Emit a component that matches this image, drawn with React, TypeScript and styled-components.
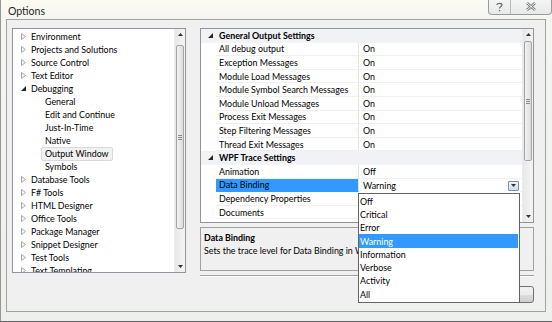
import React from "react";
import styled, { createGlobalStyle, css } from "styled-components";

const GlobalStyle = createGlobalStyle`
  html, body { margin: 0; padding: 0; background: #f2f4f1; }
  body { width: 552px; height: 322px; overflow: hidden; font-family: Lato, "Open Sans", sans-serif; font-size: 8.9px; color: #000; }
  * { box-sizing: border-box; }
`;

const Frame = styled.div`
  width: 552px;
  height: 322px;
  display: flex;
  flex-direction: column;
  background: linear-gradient(180deg, #fbfbf3 0px, #f4f6f2 18px, #eef0ee 100%);
  border-left: 1px solid #9a9590;
  border-bottom: 1px solid #606060;
  padding: 0 0 9px 5px;
  position: relative;
`;

const TitleBar = styled.div`
  height: 19px;
  display: flex;
  align-items: flex-start;
  justify-content: space-between;
`;

const Title = styled.div`
  padding: 5px 0 0 2px;
  font-size: 10.5px;
  color: #1e1e1e;
`;

const CaptionButtons = styled.div`
  display: flex;
  height: 16px;
  margin-top: -1px;
  border: 1px solid #9a9a9a;
  border-top: none;
  border-radius: 0 0 4px 4px;
  background: linear-gradient(180deg, #f6f6f6, #e6e8ea);
  overflow: hidden;
`;

const CaptionButton = styled.div<{ $w: number; $last?: boolean }>`
  width: ${(p) => p.$w}px;
  display: flex;
  align-items: center;
  justify-content: center;
  ${(p) => !p.$last && css`border-right: 1px solid #b8b8b8;`}
`;

const Client = styled.div`
  flex: 1;
  margin-right: 6px;
  background: #f0f0f0;
  border: 1px solid #a2a2a2;
  display: grid;
  grid-template-columns: 174px 334px;
  column-gap: 14px;
  align-items: start;
  padding: 8px 0 0 5px;
`;

const TreePanel = styled.div`
  height: 245px;
  border: 1px solid #8f959b;
  background: #fff;
  display: flex;
  overflow: hidden;
`;

const TreeList = styled.div`
  flex: 1;
  padding-top: 1px;
  overflow: hidden;
`;

const TreeRow = styled.div<{ $level: number }>`
  height: 13px;
  display: flex;
  align-items: center;
  padding-left: ${(p) => (p.$level ? 28 : 8)}px;
  white-space: nowrap;
`;

const Expander = styled.span`
  width: 6px;
  display: inline-flex;
  align-items: center;
`;

const TreeLabel = styled.span<{ $selected?: boolean }>`
  line-height: 12px;
  padding: 0 3px;
  border: 1px solid transparent;
  ${(p) =>
    p.$selected &&
    css`
      background: #f1f1f1;
      border-color: #dadada;
      border-radius: 2px;
    `}
`;

const VScroll = styled.div`
  width: 11px;
  display: flex;
  flex-direction: column;
  background: linear-gradient(90deg, #e8e8e8, #f4f4f4);
  border-left: 1px solid #ececec;
`;

const ScrollArrow = styled.div`
  height: 11px;
  display: flex;
  align-items: center;
  justify-content: center;
`;

const Spacer = styled.div<{ $h: number }>`
  height: ${(p) => p.$h}px;
  flex: none;
`;

const Thumb = styled.div<{ $h: number }>`
  height: ${(p) => p.$h}px;
  margin: 0 1px;
  border: 1px solid #a4a4a4;
  border-radius: 2px;
  background: linear-gradient(90deg, #f2f2f2, #dcdcdc);
  display: flex;
  align-items: center;
  justify-content: center;
`;

const Grip = styled.div`
  width: 4px;
  height: 5px;
  background: repeating-linear-gradient(180deg, #8a8a8a 0 1px, transparent 1px 2px);
`;

const Fill = styled.div`
  flex: 1;
`;

const RightColumn = styled.div`
  display: flex;
  flex-direction: column;
`;

const PropGrid = styled.div`
  height: 195px;
  border: 1px solid #8f959b;
  background: #fff;
  display: flex;
`;

const GridBody = styled.div`
  flex: 1;
  display: flex;
  flex-direction: column;
`;

const CategoryRow = styled.div`
  height: 13.6px;
  flex: none;
  display: flex;
  align-items: center;
  background: #f1f2f6;
  font-weight: 700;
  border-bottom: 1px solid #f4f4f6;
`;

const CatGlyph = styled.span`
  width: 18px;
  display: inline-flex;
  justify-content: center;
  padding-left: 1px;
`;

const PropRow = styled.div`
  height: 13.6px;
  flex: none;
  display: grid;
  grid-template-columns: 15px 143px 1fr;
`;

const Gutter = styled.div`
  background: #fff;
`;

const NameCell = styled.div<{ $selected?: boolean }>`
  padding-left: 3px;
  display: flex;
  align-items: center;
  border-bottom: 1px solid #f0f0f0;
  border-right: 1px solid #e4e4e4;
  white-space: nowrap;
  overflow: hidden;
  ${(p) =>
    p.$selected &&
    css`
      background: #3399ff;
      border-bottom-color: #3399ff;
    `}
`;

const ValueCell = styled.div`
  padding-left: 4px;
  display: flex;
  align-items: center;
  border-bottom: 1px solid #f0f0f0;
  position: relative;
`;

const Combo = styled.div`
  position: absolute;
  left: 0;
  right: 2px;
  top: 1px;
  bottom: -1px;
  display: flex;
  align-items: center;
  padding-left: 4px;
  background: #fff;
`;

const ComboText = styled.span`
  flex: 1;
`;

const ComboButton = styled.div`
  width: 11px;
  height: 10px;
  border: 1px solid #7a8ea8;
  border-radius: 1px;
  background: linear-gradient(180deg, #f2f6fb, #cfdcec);
  display: flex;
  align-items: center;
  justify-content: center;
  margin-right: 1px;
`;

const DropList = styled.div`
  position: absolute;
  left: -1px;
  top: 13px;
  width: 162px;
  border: 1px solid #646464;
  background: #fff;
  padding: 1px 0;
  z-index: 10;
`;

const DropItem = styled.div<{ $active?: boolean }>`
  height: 13.3px;
  display: flex;
  align-items: center;
  padding-left: 1px;
  margin-right: 1px;
  ${(p) =>
    p.$active &&
    css`
      background: #3399ff;
      color: #fff;
    `}
`;

const DescBox = styled.div`
  margin-top: 4px;
  height: 44px;
  border: 1px solid #a0a0a0;
  background: #f0f0f0;
  padding: 3px 3px 0;
  line-height: 13px;
  overflow: hidden;
  white-space: nowrap;
`;

const DescTitle = styled.div`
  font-weight: 700;
`;

const Separator = styled.div`
  margin-top: 4px;
  height: 2px;
  border-top: 1px solid #a0a0a0;
  border-bottom: 1px solid #fff;
`;

const ButtonRow = styled.div`
  margin-top: 9px;
  display: flex;
  justify-content: flex-end;
  gap: 6px;
`;

const DlgButton = styled.button`
  width: 73px;
  height: 17px;
  font: inherit;
  border: 1px solid #707070;
  border-radius: 3px;
  background: linear-gradient(180deg, #f2f2f2 0%, #ebebeb 50%, #dddddd 51%, #cfcfcf 100%);
  padding: 0;
`;

const Collapsed = () => (
  <svg width="5" height="7" viewBox="0 0 5 7">
    <path d="M0.5 0.5 L4.5 3.5 L0.5 6.5 Z" fill="#fff" stroke="#a6a6a6" strokeWidth="1" />
  </svg>
);

const Expanded = () => (
  <svg width="5" height="5" viewBox="0 0 5 5">
    <path d="M5 0 L5 5 L0 5 Z" fill="#262626" />
  </svg>
);

const UpArrow = () => (
  <svg width="5" height="3" viewBox="0 0 5 3">
    <path d="M0 3 L2.5 0 L5 3 Z" fill="#333" />
  </svg>
);

const DownArrow = () => (
  <svg width="5" height="3" viewBox="0 0 5 3">
    <path d="M0 0 L5 0 L2.5 3 Z" fill="#333" />
  </svg>
);

type TreeItem = { label: string; level: number; state?: "c" | "e"; selected?: boolean };

const treeItems: TreeItem[] = [
  { label: "Environment", level: 0, state: "c" },
  { label: "Projects and Solutions", level: 0, state: "c" },
  { label: "Source Control", level: 0, state: "c" },
  { label: "Text Editor", level: 0, state: "c" },
  { label: "Debugging", level: 0, state: "e" },
  { label: "General", level: 1 },
  { label: "Edit and Continue", level: 1 },
  { label: "Just-In-Time", level: 1 },
  { label: "Native", level: 1 },
  { label: "Output Window", level: 1, selected: true },
  { label: "Symbols", level: 1 },
  { label: "Database Tools", level: 0, state: "c" },
  { label: "F# Tools", level: 0, state: "c" },
  { label: "HTML Designer", level: 0, state: "c" },
  { label: "Office Tools", level: 0, state: "c" },
  { label: "Package Manager", level: 0, state: "c" },
  { label: "Snippet Designer", level: 0, state: "c" },
  { label: "Test Tools", level: 0, state: "c" },
  { label: "Text Templating", level: 0, state: "c" },
];

type GridEntry =
  | { kind: "cat"; label: string }
  | { kind: "prop"; name: string; value: string; selected?: boolean };

const gridEntries: GridEntry[] = [
  { kind: "cat", label: "General Output Settings" },
  { kind: "prop", name: "All debug output", value: "On" },
  { kind: "prop", name: "Exception Messages", value: "On" },
  { kind: "prop", name: "Module Load Messages", value: "On" },
  { kind: "prop", name: "Module Symbol Search Messages", value: "On" },
  { kind: "prop", name: "Module Unload Messages", value: "On" },
  { kind: "prop", name: "Process Exit Messages", value: "On" },
  { kind: "prop", name: "Step Filtering Messages", value: "On" },
  { kind: "prop", name: "Thread Exit Messages", value: "On" },
  { kind: "cat", label: "WPF Trace Settings" },
  { kind: "prop", name: "Animation", value: "Off" },
  { kind: "prop", name: "Data Binding", value: "Warning", selected: true },
  { kind: "prop", name: "Dependency Properties", value: "" },
  { kind: "prop", name: "Documents", value: "" },
];

const levels = ["Off", "Critical", "Error", "Warning", "Information", "Verbose", "Activity", "All"];

const Scrollbar: React.FC<{ before: number; thumb: number }> = ({ before, thumb }) => (
  <VScroll>
    <ScrollArrow>
      <UpArrow />
    </ScrollArrow>
    <Spacer $h={before} />
    <Thumb $h={thumb}>
      <Grip />
    </Thumb>
    <Fill />
    <ScrollArrow>
      <DownArrow />
    </ScrollArrow>
  </VScroll>
);

export default function App() {
  return (
    <>
      <GlobalStyle />
      <Frame>
        <TitleBar>
          <Title>Options</Title>
          <CaptionButtons>
            <CaptionButton $w={22}>
              <svg width="7" height="10" viewBox="0 0 7 10">
                <path
                  d="M1 3 C1 0.8 6 0.8 6 3 C6 4.6 3.5 4.6 3.5 6.5 M3.5 8 L3.5 9.2"
                  fill="none"
                  stroke="#6a6a6a"
                  strokeWidth="1.3"
                />
              </svg>
            </CaptionButton>
            <CaptionButton $w={40} $last>
              <svg width="10" height="9" viewBox="0 0 10 9">
                <path d="M1 1 L9 8 M9 1 L1 8" fill="none" stroke="#7a7a7a" strokeWidth="2.6" />
                <path d="M1 1 L9 8 M9 1 L1 8" fill="none" stroke="#f4f4f4" strokeWidth="1" />
              </svg>
            </CaptionButton>
          </CaptionButtons>
        </TitleBar>
        <Client>
          <TreePanel>
            <TreeList>
              {treeItems.map((t) => (
                <TreeRow key={t.label} $level={t.level}>
                  {t.level === 0 && (
                    <Expander>{t.state === "e" ? <Expanded /> : <Collapsed />}</Expander>
                  )}
                  <TreeLabel $selected={t.selected}>{t.label}</TreeLabel>
                </TreeRow>
              ))}
            </TreeList>
            <Scrollbar before={5} thumb={184} />
          </TreePanel>
          <RightColumn>
            <PropGrid>
              <GridBody>
                {gridEntries.map((e) =>
                  e.kind === "cat" ? (
                    <CategoryRow key={e.label}>
                      <CatGlyph>
                        <Expanded />
                      </CatGlyph>
                      {e.label}
                    </CategoryRow>
                  ) : (
                    <PropRow key={e.name}>
                      <Gutter />
                      <NameCell $selected={e.selected}>{e.name}</NameCell>
                      <ValueCell>
                        {e.selected ? (
                          <Combo>
                            <ComboText>{e.value}</ComboText>
                            <ComboButton>
                              <DownArrow />
                            </ComboButton>
                            <DropList>
                              {levels.map((l) => (
                                <DropItem key={l} $active={l === e.value}>
                                  {l}
                                </DropItem>
                              ))}
                            </DropList>
                          </Combo>
                        ) : (
                          e.value
                        )}
                      </ValueCell>
                    </PropRow>
                  )
                )}
              </GridBody>
              <Scrollbar before={1} thumb={120} />
            </PropGrid>
            <DescBox>
              <DescTitle>Data Binding</DescTitle>
              <div>Sets the trace level for Data Binding in WPF.</div>
            </DescBox>
            <Separator />
            <ButtonRow>
              <DlgButton>OK</DlgButton>
              <DlgButton>Cancel</DlgButton>
            </ButtonRow>
          </RightColumn>
        </Client>
      </Frame>
    </>
  );
}
